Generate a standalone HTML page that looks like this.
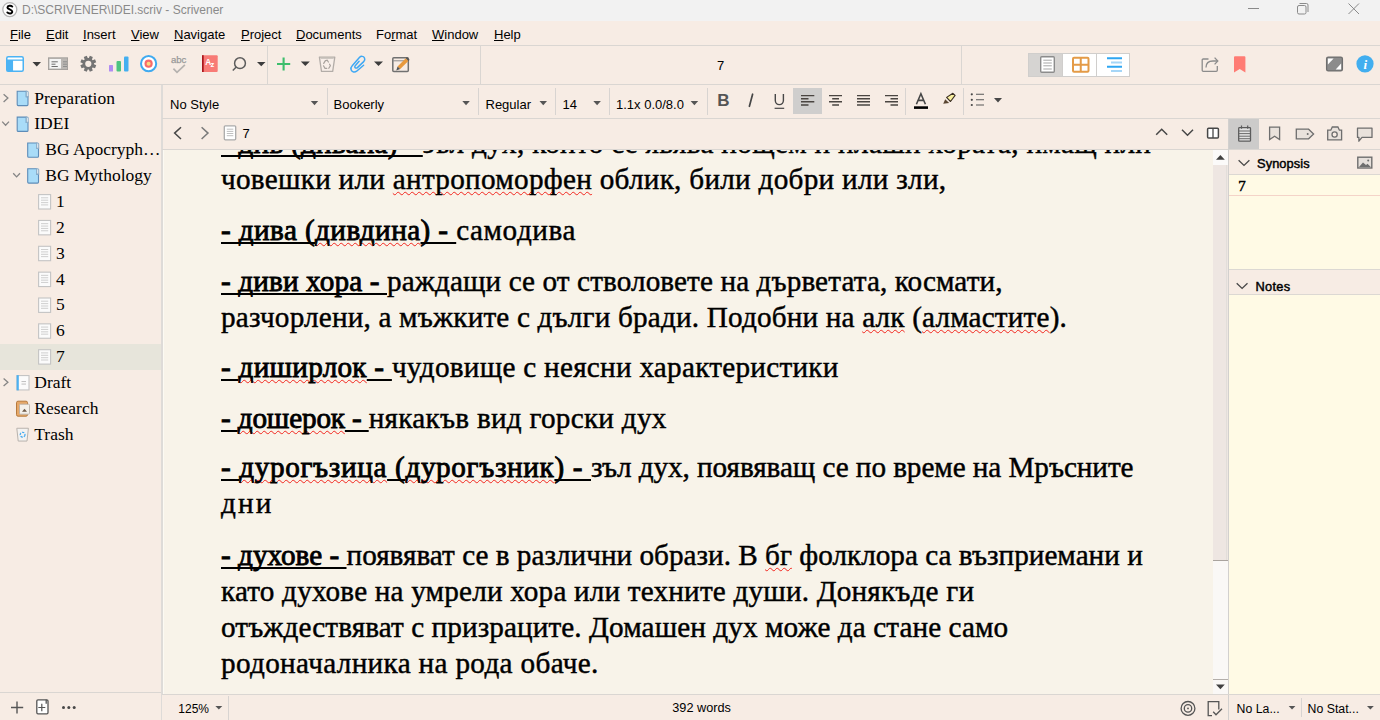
<!DOCTYPE html>
<html><head><meta charset="utf-8">
<style>
*{margin:0;padding:0;box-sizing:border-box}
html,body{width:1380px;height:720px;overflow:hidden;background:#F7ECE4;font-family:"Liberation Sans",sans-serif;color:#000}
.a{position:absolute}
.t{position:absolute;white-space:nowrap}
.t u{text-decoration-thickness:1px;text-underline-offset:0.5px}
#editor{left:162px;top:150px;width:1051px;height:544px;background:#F8F3E9;overflow:hidden}
.ln{position:absolute;left:59px;-webkit-text-stroke:0.45px #000;font-family:"Liberation Serif",serif;font-size:29.2px;line-height:36px;white-space:nowrap;color:#000}
.ln s{text-decoration:underline wavy #F2261F;text-decoration-thickness:1.4px;text-underline-offset:1.5px;text-decoration-skip-ink:none}
.ln b{font-weight:normal;-webkit-text-stroke:0.85px #000}
.ln i{font-style:normal;text-decoration:underline;text-decoration-thickness:2px;text-underline-offset:1.5px;text-decoration-skip-ink:none}
svg{position:absolute;left:0;top:0}
</style></head><body>
<div class="a" style="left:0;top:0;width:1380px;height:21px;background:#F2F2F2"></div>
<div class="a" style="left:1229px;top:150px;width:151px;height:544px;background:#FFFAE5"></div>
<div id="editor" class="a">
<div class="ln" style="top:-25.05px;letter-spacing:0.304px"><b style="letter-spacing:0.240px"><i>- див (дивана) - </i></b>зъл дух, който се явява нощем и плаши хората, имащ или</div>
<div class="ln" style="top:11.14px;letter-spacing:0.275px">човешки или <s>антропоморфен</s> облик, били добри или зли,</div>
<div class="ln" style="top:62.14px;letter-spacing:0.556px"><b style="letter-spacing:0.406px"><i>- дива (</i><s>дивдина</s><i>) - </i></b>самодива</div>
<div class="ln" style="top:113.14px;letter-spacing:0.098px"><b style="letter-spacing:0.134px"><i>- диви хора - </i></b>раждащи се от стволовете на дърветата, космати,</div>
<div class="ln" style="top:149.15px;letter-spacing:0.175px">разчорлени, а мъжките с дълги бради. Подобни на <s>алк</s> (<s>алмастите</s>).</div>
<div class="ln" style="top:199.15px;letter-spacing:0.264px"><b style="letter-spacing:0.263px"><i>- </i><s>диширлок</s><i> - </i></b>чудовище с неясни характеристики</div>
<div class="ln" style="top:249.65px;letter-spacing:0.261px"><b style="letter-spacing:-0.157px"><i>- </i><s>дошерок</s><i> - </i></b>някакъв вид горски дух</div>
<div class="ln" style="top:299.14px;letter-spacing:-0.066px"><b style="letter-spacing:0.637px"><i>- </i><s>дурогъзица</s><i> (</i><s>дурогъзник</s><i>) - </i></b>зъл дух, появяващ се по време на Мръсните</div>
<div class="ln" style="top:335.14px;letter-spacing:2.100px">дни</div>
<div class="ln" style="top:387.14px;letter-spacing:0.012px"><b style="letter-spacing:0.007px"><i>- духове - </i></b>появяват се в различни образи. В <s>бг</s> фолклора са възприемани и</div>
<div class="ln" style="top:423.14px;letter-spacing:0.182px">като духове на умрели хора или техните души. Донякъде ги</div>
<div class="ln" style="top:459.14px;letter-spacing:0.088px">отъждествяват с призраците. Домашен дух може да стане само</div>
<div class="ln" style="top:495.14px;letter-spacing:0.333px">родоначалника на рода обаче.</div>
</div>
<svg width="1380" height="720" viewBox="0 0 1380 720">
<g shape-rendering="crispEdges">
<!-- menu bottom border -->
<rect x="0" y="45" width="1380" height="1" fill="#DAD6D2"/>
<!-- toolbar bottom -->
<rect x="0" y="84" width="1380" height="1" fill="#DAD6D2"/>
<!-- toolbar separators -->
<rect x="267" y="45" width="1" height="39" fill="#DAD6D2"/>
<rect x="480" y="45" width="1" height="39" fill="#DAD6D2"/>
<rect x="961" y="45" width="1" height="39" fill="#DAD6D2"/>
<!-- binder right border -->
<rect x="161" y="85" width="2" height="635" fill="#DEDBD8"/>
<rect x="163" y="150" width="1" height="544" fill="#FCFAF3"/>
<!-- format bar bottom -->
<rect x="162" y="118" width="1218" height="1" fill="#DAD6D2"/>
<!-- editor header bottom -->
<rect x="162" y="149" width="1218" height="1" fill="#DAD6D2"/>
<!-- format separators -->
<rect x="327" y="88" width="1" height="27" fill="#D8D4D1"/>
<rect x="478" y="88" width="1" height="27" fill="#D8D4D1"/>
<rect x="555" y="88" width="1" height="27" fill="#D8D4D1"/>
<rect x="609" y="88" width="1" height="27" fill="#D8D4D1"/>
<rect x="707" y="88" width="1" height="27" fill="#D8D4D1"/>
<rect x="905" y="88" width="1" height="27" fill="#D8D4D1"/>
<rect x="963" y="88" width="1" height="27" fill="#D8D4D1"/>
<!-- inspector left border -->
<rect x="1228" y="119" width="1" height="601" fill="#D2D0CE"/>
<!-- inspector selected tab -->
<rect x="1229" y="119" width="30" height="30" fill="#CCCBCA"/>
<!-- synopsis header -->
<rect x="1229" y="150" width="151" height="24" fill="#F7ECE4"/>
<rect x="1229" y="174" width="151" height="1" fill="#DCD8D3"/>
<rect x="1229" y="195" width="151" height="1" fill="#F4D3C8"/>
<rect x="1229" y="269" width="151" height="1" fill="#DCD8D3"/>
<rect x="1229" y="270" width="151" height="24" fill="#F7ECE4"/>
<rect x="1229" y="294" width="151" height="1" fill="#DCD8D3"/>
<!-- scrollbar -->
<rect x="1213" y="150" width="15" height="544" fill="#FAF8F6"/>
<rect x="1213" y="150" width="15" height="15" fill="#FBFAF9"/>
<rect x="1213" y="165" width="15" height="396" fill="#EEE6E2"/>
<rect x="1213" y="560" width="15" height="1" fill="#A9A39E"/>
<rect x="1213" y="679" width="15" height="1" fill="#B3AEAA"/>
<rect x="1226" y="165" width="1" height="395" fill="#E2DEDA"/>
<!-- footers -->
<rect x="0" y="692" width="161" height="1" fill="#DAD6D2"/>
<rect x="162" y="694" width="1218" height="1" fill="#DAD6D2"/>
<rect x="162" y="695" width="1066" height="25" fill="#F7ECE4"/>
<rect x="1229" y="695" width="151" height="25" fill="#F7ECE4"/>
<rect x="228" y="696" width="1" height="24" fill="#D8D4D1"/>
<rect x="1301" y="698" width="1" height="19" fill="#D8D4D1"/>
<!-- binder selection -->
<rect x="0" y="344" width="161" height="26" fill="#E7E5DB"/>
<!-- align-left selected -->
<rect x="793" y="88" width="29" height="26" fill="#CFCECD"/>
<!-- segmented control -->
<rect x="1028" y="53" width="102" height="24" fill="#D0CECC"/>
<rect x="1029" y="54" width="33" height="22" fill="#D6D4D2"/>
<rect x="1063" y="54" width="33" height="22" fill="#FFFFFF"/>
<rect x="1097" y="54" width="32" height="22" fill="#FFFFFF"/>
</g>
<!-- ===== title bar ===== -->
<circle cx="9.8" cy="9.6" r="7" fill="#fff" stroke="#B3B3B3" stroke-width="1.3"/>
<path d="M12.3 6.6C11.2 5.4 7.6 5.4 7.4 7.5C7.2 9.4 12.4 9.4 12.3 11.7C12.2 13.9 8.6 13.9 7.3 12.4" fill="none" stroke="#000" stroke-width="1.9" stroke-linecap="round"/>
<path d="M1248 8.5H1259" stroke="#8A8A8A" stroke-width="1"/>
<rect x="1297.5" y="5.5" width="8.5" height="8.5" rx="1.5" fill="none" stroke="#8A8A8A" stroke-width="1"/>
<path d="M1299.5 3.5H1306.5A1.5 1.5 0 0 1 1308 5V12" fill="none" stroke="#8A8A8A" stroke-width="1"/>
<path d="M1348.5 3.5L1359 14M1359 3.5L1348.5 14" stroke="#8A8A8A" stroke-width="1"/>
<!-- ===== toolbar ===== -->
<!-- binder toggle -->
<rect x="6.75" y="56.75" width="16.5" height="14.5" rx="1.5" fill="#fff" stroke="#4CB3F4" stroke-width="1.5"/>
<rect x="6.75" y="59.5" width="16.5" height="1.3" fill="#4CB3F4"/>
<rect x="6.75" y="60" width="6.3" height="11.25" fill="#4CB3F4"/>
<path d="M32.5 62H41L36.75 66.5Z" fill="#3C3C3C"/>
<!-- composition -->
<rect x="48" y="57.5" width="20" height="12.5" fill="#BBB7B3"/>
<rect x="48.4" y="57.9" width="19.2" height="11.7" fill="none" stroke="#A29D99" stroke-width="0.8"/>
<rect x="49.5" y="59" width="11.5" height="9.5" fill="#F4F4F4"/>
<path d="M51.5 61.8H57.8M51.5 64.2H55.5M51.5 66.5H57.8" stroke="#6E6E6E" stroke-width="1"/>
<path d="M63 61.8H67M63 64.2H67M63 66.5H67" stroke="#8E8E8E" stroke-width="1"/>
<!-- gear -->
<path d="M93.98 64.33 L96.25 65.35 L95.02 68.32 L92.69 67.44 L91.94 68.19 L92.82 70.52 L89.85 71.75 L88.83 69.48 L87.77 69.48 L86.75 71.75 L83.78 70.52 L84.66 68.19 L83.91 67.44 L81.58 68.32 L80.35 65.35 L82.62 64.33 L82.62 63.27 L80.35 62.25 L81.58 59.28 L83.91 60.16 L84.66 59.41 L83.78 57.08 L86.75 55.85 L87.77 58.12 L88.83 58.12 L89.85 55.85 L92.82 57.08 L91.94 59.41 L92.69 60.16 L95.02 59.28 L96.25 62.25 L93.98 63.27Z M91.40 63.8 A3.1 3.1 0 1 0 85.20 63.8 A3.1 3.1 0 1 0 91.40 63.8Z" fill="#747474" fill-rule="evenodd"/>
<!-- bars -->
<rect x="109" y="65" width="4" height="6.5" rx="0.6" fill="#B18CF2"/>
<rect x="116.5" y="61" width="4.5" height="10.5" rx="1" fill="#4DC480"/>
<rect x="124" y="56.5" width="4.5" height="15" rx="1" fill="#44AFF0"/>
<!-- target -->
<circle cx="148.6" cy="63.7" r="7.6" fill="#fff" stroke="#3FAAF0" stroke-width="2"/>
<circle cx="148.6" cy="63.7" r="4.1" fill="#F76B6B"/>
<circle cx="148.6" cy="63.7" r="2" fill="#FBD77E"/>
<!-- spell -->
<text x="170.9" y="62.6" font-family="Liberation Sans" font-size="9.6" fill="#999" stroke="#999" stroke-width="0.25">abc</text>
<path d="M173.4 68.6L177 72.3L184.9 64.8" fill="none" stroke="#B5B2AF" stroke-width="1.7"/>
<!-- dictionary -->
<rect x="202" y="55.2" width="15.7" height="16.8" rx="1" fill="#F87B76"/>
<rect x="202" y="55.2" width="1.7" height="16.8" fill="#A8161C"/>
<text x="205.2" y="65.4" font-family="Liberation Sans" font-weight="bold" font-size="8.2" fill="#fff">A</text>
<text x="210.6" y="67.4" font-family="Liberation Sans" font-weight="bold" font-size="7.6" fill="#fff">z</text>
<!-- search -->
<circle cx="240" cy="63.2" r="5.4" fill="none" stroke="#5C5C5C" stroke-width="1.5"/>
<path d="M236.3 67L232.8 70.6" stroke="#5C5C5C" stroke-width="1.5"/>
<path d="M257 62H265.5L261.25 66.3Z" fill="#3C3C3C"/>
<!-- plus -->
<path d="M283.6 57.5V70.6M277 64H290.2" stroke="#3DBE6C" stroke-width="2.1"/>
<path d="M300.8 61.5H309.8L305.3 66Z" fill="#3C3C3C"/>
<!-- trash -->
<path d="M319.4 57.2H334.8L332.7 71.3H321.5Z" fill="#F8EFE9" stroke="#B3ADA8" stroke-width="1.3" stroke-linejoin="round"/>
<path d="M320.5 58.4H333.7" stroke="#C9C3BE" stroke-width="1"/>
<path d="M325.4 60.6L323.7 63.4M323.5 65.8L325 68.3H326.8M328.8 68.3L330.4 65.8L329.6 64.2M328.4 62L327.2 60.1L325.6 60.6" fill="none" stroke="#A8A29D" stroke-width="1.2" stroke-linecap="round"/>
<!-- paperclip -->
<path d="M363.6 65.2L356.6 71.2C354.8 72.6 352 72.2 351.2 70C350.6 68.4 351 67 352.2 65.8L359.4 57.6C361 55.8 363.6 56 364.5 58C365.1 59.3 364.8 60.6 363.7 61.6L357.4 67.6C356.4 68.5 354.6 68.1 354.8 66.6C354.9 66 355.2 65.6 355.6 65.2L359.1 61.3" fill="none" stroke="#3EA8F4" stroke-width="1.5" stroke-linecap="round" stroke-linejoin="round"/>
<path d="M374 61.5H383L378.5 66Z" fill="#3C3C3C"/>
<!-- edit -->
<rect x="392.8" y="57.8" width="15.5" height="13.6" rx="1" fill="none" stroke="#707070" stroke-width="1.5"/>
<path d="M393 60.8H404" stroke="#8A8A8A" stroke-width="1"/>
<path d="M397.6 66.5L405.8 58.3L408.4 60.9L400.2 69.1Z" fill="#E8993C"/>
<path d="M405.8 58.3L407 57.1L409.6 59.7L408.4 60.9Z" fill="#555"/>
<path d="M397.6 66.5L400.2 69.1L396.2 70.5Z" fill="#555"/>
<!-- segmented icons -->
<rect x="1040.7" y="56.7" width="13.6" height="15.6" rx="1" fill="#fff" stroke="#8C8C8C" stroke-width="1.4"/>
<path d="M1043.3 60.2H1051.8M1043.3 63H1051.8M1043.3 65.8H1051.8M1043.3 69H1051.8" stroke="#A5A5A5" stroke-width="1"/>
<rect x="1073" y="57.8" width="15.5" height="14" rx="1" fill="#fff" stroke="#E49B47" stroke-width="2"/>
<path d="M1080.75 57.8V71.8M1073 64.8H1088.5" stroke="#E49B47" stroke-width="2"/>
<path d="M1107 58.2H1122M1107 66.7H1122" stroke="#2FA6F2" stroke-width="2"/>
<path d="M1111 62.5H1122M1111 71H1122" stroke="#A6D6F7" stroke-width="2"/>
<!-- share -->
<path d="M1208.5 59H1203.3A1.1 1.1 0 0 0 1202.2 60.1V70.3A1.1 1.1 0 0 0 1203.3 71.4H1216.2A1.1 1.1 0 0 0 1217.3 70.3V66" fill="none" stroke="#8C8C8C" stroke-width="1.3"/>
<path d="M1206 67.5C1206 62.5 1209 61 1213 61H1217.5" fill="none" stroke="#8C8C8C" stroke-width="1.3"/>
<path d="M1214.6 57.6L1217.8 61L1214.6 64.4" fill="none" stroke="#8C8C8C" stroke-width="1.3"/>
<!-- bookmark -->
<path d="M1234 57.3A1 1 0 0 1 1235 56.3H1244.4A1 1 0 0 1 1245.4 57.3V72.5L1239.7 69L1234 72.5Z" fill="#FF7C74"/>
<!-- inspector toggle -->
<rect x="1326.6" y="57.1" width="15.8" height="13.8" rx="1.6" fill="#8C8C8C" stroke="#6E6E6E" stroke-width="1.3"/>
<path d="M1327.9 58.4H1333.6L1327.9 64.6Z" fill="#fff"/>
<path d="M1341.1 63.6V69.6H1335.7Z" fill="#fff"/>
<!-- info -->
<circle cx="1365" cy="63.8" r="8.6" fill="#42AEEF"/>
<text x="1363.5" y="69.3" font-family="Liberation Serif" font-style="italic" font-weight="bold" font-size="13" fill="#fff">i</text>
<!-- ===== format bar ===== -->
<path d="M310.8 101H318.2L314.5 105.2Z" fill="#555"/>
<path d="M462.3 101H469.8L466.05 105.2Z" fill="#555"/>
<path d="M539.5 101H547L543.25 105.2Z" fill="#555"/>
<path d="M593.3 101H600.9L597.1 105.2Z" fill="#555"/>
<path d="M690.6 101H698.2L694.4 105.2Z" fill="#555"/>
<!-- I -->
<path d="M752.6 94.2L749.4 106.3" stroke="#474747" stroke-width="1.7" stroke-linecap="round"/>
<!-- U -->
<path d="M775.3 94V100.6A4.05 4.05 0 0 0 783.4 100.6V94" fill="none" stroke="#474747" stroke-width="1.4"/>
<path d="M774.6 108.3H784.2" stroke="#474747" stroke-width="1.2"/>
<!-- aligns -->
<g stroke="#4A4541" stroke-width="1.4">
<path d="M801 95.6H814.3M801 98.7H808.5M801 101.8H814.3M801 105H808.5"/>
<path d="M829 95.6H842M832.2 98.7H839M829 101.8H842M832.2 105H839"/>
<path d="M857 95.6H870M857 98.7H870M857 101.8H870M857 105H870"/>
<path d="M885 95.6H898M890.5 98.7H898M885 101.8H898M890.5 105H898"/>
</g>
<!-- A color -->
<path d="M916.4 104.3L920.9 93.8L925.4 104.3M918.2 100.4H923.6" fill="none" stroke="#474747" stroke-width="1.6"/>
<rect x="914" y="106.3" width="14" height="2.6" fill="#000"/>
<!-- highlighter -->
<path d="M946.6 97.4L952.9 93.3L955.1 95.4L950.5 101.5Z" fill="#FAF1A0" stroke="#3A2E22" stroke-width="1.1" stroke-linejoin="round"/>
<path d="M943.2 103.8L945.2 99.3L949.2 102.9Z" fill="#5A4632"/>
<!-- list -->
<g fill="#474747"><circle cx="971.8" cy="94.3" r="1.1"/><circle cx="971.8" cy="99.8" r="1.1"/><circle cx="971.8" cy="105" r="1.1"/></g>
<path d="M976 94.3H984M976 99.8H984M976 105H984" stroke="#575757" stroke-width="1.1"/>
<path d="M994 98H1002L998 102.4Z" fill="#474747"/>
<!-- ===== editor header ===== -->
<path d="M181 127.2L174.6 133.1L181 139" fill="none" stroke="#474747" stroke-width="1.5"/>
<path d="M201.6 127.2L208 133.1L201.6 139" fill="none" stroke="#7A7A7A" stroke-width="1.5"/>
<rect x="224.3" y="125.8" width="11.4" height="14" rx="1" fill="#fff" stroke="#AAAAAA" stroke-width="1.3"/>
<path d="M226.8 129.2H233.3M226.8 131.4H233.3M226.8 133.5H233.3M226.8 135.7H233.3" stroke="#B8B8B8" stroke-width="0.9"/>
<path d="M1156.2 134.8L1161.7 129.2L1167.2 134.8" fill="none" stroke="#474747" stroke-width="1.5"/>
<path d="M1182 129.8L1187.5 135.3L1193 129.8" fill="none" stroke="#474747" stroke-width="1.5"/>
<rect x="1207.6" y="128.3" width="10.8" height="9.6" rx="1" fill="#fff" stroke="#474747" stroke-width="1.5"/>
<path d="M1213 128.3V137.9" stroke="#474747" stroke-width="1.3"/>
<!-- inspector tabs -->
<rect x="1238.7" y="127.6" width="11.8" height="13.6" rx="0.8" fill="#E2E2E2" stroke="#5B5B5B" stroke-width="1.3"/>
<path d="M1239 131H1250.2M1239 133.6H1250.2M1239 136.2H1250.2M1239 138.7H1250.2" stroke="#6A6A6A" stroke-width="1"/>
<path d="M1241.5 125.6V128.8M1247.7 125.6V128.8" stroke="#5B5B5B" stroke-width="1.2"/>
<path d="M1269.6 127.2H1279.6V139.6L1274.6 136.2L1269.6 139.6Z" fill="#E9E2DC" stroke="#6E6E6E" stroke-width="1.3" stroke-linejoin="miter"/>
<path d="M1296.3 129.2H1308.6L1313.6 134L1308.6 138.8H1296.3Z" fill="#E9E2DC" stroke="#6E6E6E" stroke-width="1.3"/>
<circle cx="1307.7" cy="134" r="1" fill="#6E6E6E"/>
<path d="M1327.7 130.2H1330.8L1332.3 127H1337.9L1339.4 130.2H1341.6V139.8H1327.7Z" fill="#E9E2DC" stroke="#6E6E6E" stroke-width="1.3"/>
<circle cx="1334.6" cy="134.5" r="2.6" fill="#F7ECE4" stroke="#6E6E6E" stroke-width="1.3"/>
<path d="M1357.5 128.2H1372V137.4H1362L1358.9 141.2V137.4H1357.5Z" fill="#E9E2DC" stroke="#6E6E6E" stroke-width="1.3" stroke-linejoin="round"/>
<!-- synopsis header -->
<path d="M1238.6 160.2L1244 165.4L1249.4 160.2" fill="none" stroke="#474747" stroke-width="1.3"/>
<rect x="1357.8" y="157.2" width="14" height="10.8" fill="#E6E0DB" stroke="#6E6E6E" stroke-width="1.4"/>
<path d="M1359 167L1363 162.5L1366 165L1367.5 163.8L1370.8 167Z" fill="#6E6E6E"/>
<circle cx="1368.2" cy="160.5" r="1" fill="#6E6E6E"/>
<path d="M1236.7 283.2L1242.1 288.4L1247.5 283.2" fill="none" stroke="#474747" stroke-width="1.3"/>
<!-- scroll arrows -->
<path d="M1216 159.8H1224.8L1220.4 155Z" fill="#404040"/>
<path d="M1216 684.5H1224.8L1220.4 689.2Z" fill="#404040"/>
<!-- ===== binder ===== -->
<g id="chev" fill="none" stroke="#858585" stroke-width="1.3">
<path d="M3.6 94.3L7.9 98.1L3.6 101.9"/>
<path d="M2.2 121.6L5.6 125.2L9 121.6"/>
<path d="M13.2 173.3L16.6 176.9L20 173.3"/>
<path d="M3.6 378.4L7.9 382.2L3.6 386"/>
</g>
<!-- folders -->
<g stroke="#5D8CB8" stroke-width="1.1">
<path d="M17.2 91.3H26.3V96.6H28V104.6A1 1 0 0 1 27 105.6H18.2A1 1 0 0 1 17.2 104.6Z" fill="#A9DCF8"/>
<path d="M26.3 91.3H27.2A1 1 0 0 1 28.2 92.3V96.6H26.3Z" fill="#fff" stroke="#8EAFC9"/>
<path d="M17.2 117.1H26.3V122.4H28V130.4A1 1 0 0 1 27 131.4H18.2A1 1 0 0 1 17.2 130.4Z" fill="#A9DCF8"/>
<path d="M26.3 117.1H27.2A1 1 0 0 1 28.2 118.1V122.4H26.3Z" fill="#fff" stroke="#8EAFC9"/>
<path d="M27.7 143H36.8V148.3H38.5V156.3A1 1 0 0 1 37.5 157.3H28.7A1 1 0 0 1 27.7 156.3Z" fill="#A9DCF8"/>
<path d="M36.8 143H37.7A1 1 0 0 1 38.7 144V148.3H36.8Z" fill="#fff" stroke="#8EAFC9"/>
<path d="M27.7 168.8H36.8V174.1H38.5V182.1A1 1 0 0 1 37.5 183.1H28.7A1 1 0 0 1 27.7 182.1Z" fill="#A9DCF8"/>
<path d="M36.8 168.8H37.7A1 1 0 0 1 38.7 169.8V174.1H36.8Z" fill="#fff" stroke="#8EAFC9"/>
</g>
<rect x="38.6" y="194.60" width="12" height="14.4" fill="#FBFBFB" stroke="#C4C4C4" stroke-width="1.1"/>
<path d="M41 197.80H48.2M41 200.20H48.2M41 202.60H48.2M41 204.90H48.2" stroke="#CACACA" stroke-width="0.9"/>
<rect x="38.6" y="220.45" width="12" height="14.4" fill="#FBFBFB" stroke="#C4C4C4" stroke-width="1.1"/>
<path d="M41 223.65H48.2M41 226.05H48.2M41 228.45H48.2M41 230.75H48.2" stroke="#CACACA" stroke-width="0.9"/>
<rect x="38.6" y="246.30" width="12" height="14.4" fill="#FBFBFB" stroke="#C4C4C4" stroke-width="1.1"/>
<path d="M41 249.50H48.2M41 251.90H48.2M41 254.30H48.2M41 256.60H48.2" stroke="#CACACA" stroke-width="0.9"/>
<rect x="38.6" y="272.15" width="12" height="14.4" fill="#FBFBFB" stroke="#C4C4C4" stroke-width="1.1"/>
<path d="M41 275.35H48.2M41 277.75H48.2M41 280.15H48.2M41 282.45H48.2" stroke="#CACACA" stroke-width="0.9"/>
<rect x="38.6" y="298.00" width="12" height="14.4" fill="#FBFBFB" stroke="#C4C4C4" stroke-width="1.1"/>
<path d="M41 301.20H48.2M41 303.60H48.2M41 306.00H48.2M41 308.30H48.2" stroke="#CACACA" stroke-width="0.9"/>
<rect x="38.6" y="323.85" width="12" height="14.4" fill="#FBFBFB" stroke="#C4C4C4" stroke-width="1.1"/>
<path d="M41 327.05H48.2M41 329.45H48.2M41 331.85H48.2M41 334.15H48.2" stroke="#CACACA" stroke-width="0.9"/>
<rect x="38.6" y="349.70" width="12" height="14.4" fill="#FBFBFB" stroke="#C4C4C4" stroke-width="1.1"/>
<path d="M41 352.90H48.2M41 355.30H48.2M41 357.70H48.2M41 360.00H48.2" stroke="#CACACA" stroke-width="0.9"/>
<rect x="17" y="375.55" width="12" height="14.4" fill="#FBFBFB" stroke="#C4C4C4" stroke-width="1.1"/>
<rect x="16.6" y="375.15" width="2.2" height="15.2" fill="#4DB0F0"/>
<path d="M21.5 381.55H26M21.5 384.05H26" stroke="#B8B8B8" stroke-width="0.9"/>
<rect x="16.5" y="401.20" width="11" height="15" rx="1.5" fill="#E7A868" stroke="#B67A3E" stroke-width="1"/>
<rect x="19.5" y="404.20" width="10" height="10" rx="1" fill="#F4F0EA" stroke="#B8B0A8" stroke-width="0.9"/>
<path d="M22 411.70L24.5 408.70L27 411.70Z" fill="#6E5A48"/>
<path d="M16.8 428.25H28.4L27 441.05H18.2Z" fill="#F4F2F0" stroke="#B9B3AD" stroke-width="1"/>
<circle cx="22.6" cy="434.65" r="2.4" fill="none" stroke="#3EA8F0" stroke-width="1.2" stroke-dasharray="2.2 1"/>
<path d="M17 701.6V713.5M11 707.5H23.2" stroke="#555" stroke-width="1.4"/>
<rect x="36.8" y="699.8" width="11.2" height="14" rx="1.2" fill="#fff" stroke="#555" stroke-width="1.3"/>
<path d="M46.2 699.8V703.8" stroke="#555" stroke-width="1.3"/>
<path d="M41.8 703.8V711.2M38.3 707.5H45.3" stroke="#555" stroke-width="1.2"/>
<g fill="#474747"><circle cx="63.5" cy="707.5" r="1.5"/><circle cx="68.8" cy="707.5" r="1.5"/><circle cx="74.2" cy="707.5" r="1.5"/></g>
<path d="M215.4 706H222.3L218.85 709.5Z" fill="#555"/>
<circle cx="1188" cy="708.4" r="6.9" fill="none" stroke="#555" stroke-width="1.3"/>
<circle cx="1188" cy="708.4" r="3.7" fill="none" stroke="#555" stroke-width="1.3"/>
<circle cx="1188" cy="708.4" r="0.9" fill="#555"/>
<path d="M1218.8 709.5V701.6H1208.2V715.6H1212" fill="none" stroke="#555" stroke-width="1.3"/>
<path d="M1213.2 711.8L1216 714.8L1222 708.8" fill="none" stroke="#555" stroke-width="1.3"/>
<path d="M1288.7 706H1295.4L1292.05 709.5Z" fill="#555"/>
<path d="M1367 706H1373.8L1370.4 709.5Z" fill="#555"/>
</svg>

<div class="t" style="left:22px;top:3.34px;font-size:12px;line-height:15.0px;color:#8A8A8A;font-weight:normal;font-family:'Liberation Sans',sans-serif;">D:\SCRIVENER\IDEI.scriv - Scrivener</div>
<div class="t" style="left:10px;top:26.67px;font-size:13px;line-height:16.25px;color:#000;font-weight:normal;font-family:'Liberation Sans',sans-serif;"><u>F</u>ile</div>
<div class="t" style="left:46px;top:26.67px;font-size:13px;line-height:16.25px;color:#000;font-weight:normal;font-family:'Liberation Sans',sans-serif;"><u>E</u>dit</div>
<div class="t" style="left:83px;top:26.67px;font-size:13px;line-height:16.25px;color:#000;font-weight:normal;font-family:'Liberation Sans',sans-serif;"><u>I</u>nsert</div>
<div class="t" style="left:131px;top:26.67px;font-size:13px;line-height:16.25px;color:#000;font-weight:normal;font-family:'Liberation Sans',sans-serif;"><u>V</u>iew</div>
<div class="t" style="left:174px;top:26.67px;font-size:13px;line-height:16.25px;color:#000;font-weight:normal;font-family:'Liberation Sans',sans-serif;"><u>N</u>avigate</div>
<div class="t" style="left:241px;top:26.67px;font-size:13px;line-height:16.25px;color:#000;font-weight:normal;font-family:'Liberation Sans',sans-serif;"><u>P</u>roject</div>
<div class="t" style="left:296px;top:26.67px;font-size:13px;line-height:16.25px;color:#000;font-weight:normal;font-family:'Liberation Sans',sans-serif;"><u>D</u>ocuments</div>
<div class="t" style="left:376px;top:26.67px;font-size:13px;line-height:16.25px;color:#000;font-weight:normal;font-family:'Liberation Sans',sans-serif;">Fo<u>r</u>mat</div>
<div class="t" style="left:432px;top:26.67px;font-size:13px;line-height:16.25px;color:#000;font-weight:normal;font-family:'Liberation Sans',sans-serif;"><u>W</u>indow</div>
<div class="t" style="left:494px;top:26.67px;font-size:13px;line-height:16.25px;color:#000;font-weight:normal;font-family:'Liberation Sans',sans-serif;"><u>H</u>elp</div>
<div class="t" style="left:717px;top:57.77px;font-size:13px;line-height:16.25px;color:#000;font-weight:normal;font-family:'Liberation Sans',sans-serif;">7</div>
<div class="t" style="left:170px;top:96.57px;font-size:13px;line-height:16.25px;color:#000;font-weight:normal;font-family:'Liberation Sans',sans-serif;">No Style</div>
<div class="t" style="left:333.5px;top:96.57px;font-size:13px;line-height:16.25px;color:#000;font-weight:normal;font-family:'Liberation Sans',sans-serif;">Bookerly</div>
<div class="t" style="left:485.5px;top:96.57px;font-size:13px;line-height:16.25px;color:#000;font-weight:normal;font-family:'Liberation Sans',sans-serif;">Regular</div>
<div class="t" style="left:562.5px;top:96.57px;font-size:13px;line-height:16.25px;color:#000;font-weight:normal;font-family:'Liberation Sans',sans-serif;">14</div>
<div class="t" style="left:616px;top:96.57px;font-size:13px;line-height:16.25px;color:#000;font-weight:normal;font-family:'Liberation Sans',sans-serif;">1.1x 0.0/8.0</div>
<div class="t" style="left:717.3px;top:90.38px;font-size:17px;line-height:21.25px;color:#555;font-weight:bold;font-family:'Liberation Sans',sans-serif;">B</div>
<div class="t" style="left:242.5px;top:125.97px;font-size:13px;line-height:16.25px;color:#000;font-weight:normal;font-family:'Liberation Sans',sans-serif;">7</div>
<div class="t" style="left:34.3px;top:87.55px;font-size:17.5px;line-height:21.88px;color:#000;font-weight:normal;font-family:'Liberation Serif',serif;">Preparation</div>
<div class="t" style="left:34.3px;top:113.40px;font-size:17.5px;line-height:21.88px;color:#000;font-weight:normal;font-family:'Liberation Serif',serif;">IDEI</div>
<div class="t" style="left:45.3px;top:139.25px;font-size:17.5px;line-height:21.88px;color:#000;font-weight:normal;font-family:'Liberation Serif',serif;">BG Apocryph…</div>
<div class="t" style="left:45.3px;top:165.10px;font-size:17.5px;line-height:21.88px;color:#000;font-weight:normal;font-family:'Liberation Serif',serif;">BG Mythology</div>
<div class="t" style="left:56px;top:190.95px;font-size:17.5px;line-height:21.88px;color:#000;font-weight:normal;font-family:'Liberation Serif',serif;">1</div>
<div class="t" style="left:56px;top:216.80px;font-size:17.5px;line-height:21.88px;color:#000;font-weight:normal;font-family:'Liberation Serif',serif;">2</div>
<div class="t" style="left:56px;top:242.65px;font-size:17.5px;line-height:21.88px;color:#000;font-weight:normal;font-family:'Liberation Serif',serif;">3</div>
<div class="t" style="left:56px;top:268.50px;font-size:17.5px;line-height:21.88px;color:#000;font-weight:normal;font-family:'Liberation Serif',serif;">4</div>
<div class="t" style="left:56px;top:294.35px;font-size:17.5px;line-height:21.88px;color:#000;font-weight:normal;font-family:'Liberation Serif',serif;">5</div>
<div class="t" style="left:56px;top:320.20px;font-size:17.5px;line-height:21.88px;color:#000;font-weight:normal;font-family:'Liberation Serif',serif;">6</div>
<div class="t" style="left:56px;top:346.05px;font-size:17.5px;line-height:21.88px;color:#000;font-weight:normal;font-family:'Liberation Serif',serif;">7</div>
<div class="t" style="left:34.3px;top:371.90px;font-size:17.5px;line-height:21.88px;color:#000;font-weight:normal;font-family:'Liberation Serif',serif;">Draft</div>
<div class="t" style="left:34.3px;top:397.75px;font-size:17.5px;line-height:21.88px;color:#000;font-weight:normal;font-family:'Liberation Serif',serif;">Research</div>
<div class="t" style="left:34.3px;top:423.60px;font-size:17.5px;line-height:21.88px;color:#000;font-weight:normal;font-family:'Liberation Serif',serif;">Trash</div>
<div class="t" style="left:1257px;top:155.96px;font-size:12.8px;line-height:16.0px;color:#000;font-weight:normal;font-family:'Liberation Sans',sans-serif;-webkit-text-stroke:0.45px #000;letter-spacing:0.1px;">Synopsis</div>
<div class="t" style="left:1238.3px;top:176.96px;font-size:15px;line-height:18.75px;color:#000;font-weight:normal;font-family:'Liberation Serif',serif;-webkit-text-stroke:0.5px #000;">7</div>
<div class="t" style="left:1255.5px;top:279.36px;font-size:12.8px;line-height:16.0px;color:#000;font-weight:normal;font-family:'Liberation Sans',sans-serif;-webkit-text-stroke:0.45px #000;letter-spacing:0.3px;">Notes</div>
<div class="t" style="left:178.3px;top:701.94px;font-size:12px;line-height:15.0px;color:#000;font-weight:normal;font-family:'Liberation Sans',sans-serif;">125%</div>
<div class="t" style="left:672.3px;top:701.46px;font-size:12.7px;line-height:15.88px;color:#000;font-weight:normal;font-family:'Liberation Sans',sans-serif;">392 words</div>
<div class="t" style="left:1236.6px;top:701.65px;font-size:12.3px;line-height:15.38px;color:#000;font-weight:normal;font-family:'Liberation Sans',sans-serif;">No La...</div>
<div class="t" style="left:1307.6px;top:701.65px;font-size:12.3px;line-height:15.38px;color:#000;font-weight:normal;font-family:'Liberation Sans',sans-serif;">No Stat...</div>
</body></html>
